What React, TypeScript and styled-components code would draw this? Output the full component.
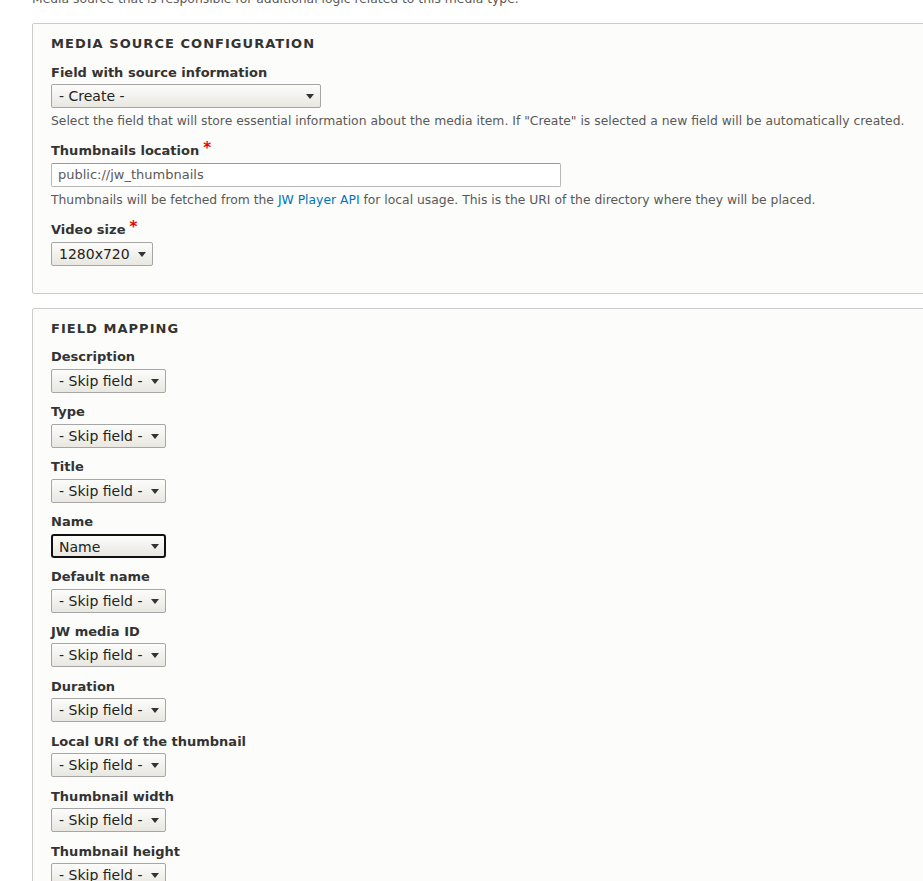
import React from "react";
import styled, { createGlobalStyle } from "styled-components";

const Global = createGlobalStyle`
  html, body {
    margin: 0;
    padding: 0;
    overflow: hidden;
    background: #ffffff;
  }
  body {
    font-family: "DejaVu Sans", "Noto Sans", sans-serif;
    font-size: 13px;
    line-height: 20px;
    color: #222;
  }
`;

const Page = styled.div`
  width: 1000px;
  padding-left: 32px;
`;

const TopDescription = styled.div`
  margin-top: -11px;
  font-size: 12.35px;
  line-height: 20px;
  color: #595959;
`;

const Fieldset = styled.section`
  margin-top: 14px;
  border: 1px solid #ccc;
  border-radius: 2px;
  background: #fcfcfa;
  padding: 10px 18px 27px 18px;
`;

const Legend = styled.div`
  font-size: 13px;
  font-weight: bold;
  line-height: 20px;
  text-transform: uppercase;
  letter-spacing: 0.08em;
  color: #333;
  margin-bottom: 8.5px;
`;

const Items = styled.div`
  display: flex;
  flex-direction: column;
  gap: 9.7px;
`;

const Item = styled.div`
  display: flex;
  flex-direction: column;
  align-items: flex-start;
`;

const Label = styled.label`
  display: block;
  font-size: 13px;
  font-weight: bold;
  line-height: 20px;
  color: #333;
  margin-bottom: 1.3px;
`;

const Required = styled.span`
  color: #e00;
  font-size: 15px;
  margin-left: 4px;
  position: relative;
  top: -2px;
`;

const SelectWrap = styled.span`
  position: relative;
  display: inline-block;
`;

const Select = styled.select<{ $w: number; $focused?: boolean }>`
  appearance: none;
  -webkit-appearance: none;
  box-sizing: border-box;
  width: ${(p) => p.$w}px;
  height: 24px;
  margin: 0;
  padding: 0 22px 0 ${(p) => (p.$focused ? 6 : 7)}px;
  font-family: "DejaVu Sans", sans-serif;
  font-size: 14px;
  line-height: 22px;
  color: #222;
  background: linear-gradient(to bottom, #fcfcfa, #e8e7e1);
  border: ${(p) => (p.$focused ? "2px solid #111" : "1px solid #a6a6a6")};
  border-radius: ${(p) => (p.$focused ? 3 : 2)}px;
  outline: none;
`;

const Arrow = styled.svg`
  position: absolute;
  right: 7px;
  top: 10px;
  width: 8px;
  height: 5px;
  pointer-events: none;
`;

const TextInput = styled.input`
  box-sizing: border-box;
  width: 510px;
  height: 24px;
  margin: 0;
  padding: 0 6px;
  font-family: "DejaVu Sans", sans-serif;
  font-size: 13px;
  color: #595959;
  background: #fff;
  border: 1px solid #b8b8b8;
  border-top-color: #999;
  border-radius: 2px;
  outline: none;
`;

const Description = styled.div`
  margin-top: 3px;
  font-size: 12.35px;
  line-height: 20px;
  color: #595959;
`;

const Link = styled.a`
  color: #0074bd;
  text-decoration: none;
`;

type SelectProps = {
  id: string;
  width: number;
  value: string;
  options: string[];
  focused?: boolean;
};

function DropSelect({ id, width, value, options, focused }: SelectProps) {
  return (
    <SelectWrap>
      <Select id={id} $w={width} $focused={focused} defaultValue={value}>
        {options.map((o) => (
          <option key={o} value={o}>
            {o}
          </option>
        ))}
      </Select>
      <Arrow viewBox="0 0 8 5" aria-hidden>
        <path d="M0 0 H8 L4 5 Z" fill="#333" />
      </Arrow>
    </SelectWrap>
  );
}

const mapping: { label: string; value: string }[] = [
  { label: "Description", value: "- Skip field -" },
  { label: "Type", value: "- Skip field -" },
  { label: "Title", value: "- Skip field -" },
  { label: "Name", value: "Name" },
  { label: "Default name", value: "- Skip field -" },
  { label: "JW media ID", value: "- Skip field -" },
  { label: "Duration", value: "- Skip field -" },
  { label: "Local URI of the thumbnail", value: "- Skip field -" },
  { label: "Thumbnail width", value: "- Skip field -" },
  { label: "Thumbnail height", value: "- Skip field -" },
];

export default function App() {
  return (
    <>
      <Global />
      <Page>
        <TopDescription>
          Media source that is responsible for additional logic related to this media type.
        </TopDescription>

        <Fieldset>
          <Legend>Media source configuration</Legend>
          <Items>
            <Item>
              <Label htmlFor="source-field">Field with source information</Label>
              <DropSelect
                id="source-field"
                width={270}
                value="- Create -"
                options={["- Create -", "Name"]}
              />
              <Description>
                Select the field that will store essential information about the media item. If
                "Create" is selected a new field will be automatically created.
              </Description>
            </Item>
            <Item>
              <Label htmlFor="thumbs">
                Thumbnails location<Required>*</Required>
              </Label>
              <TextInput id="thumbs" defaultValue="public://jw_thumbnails" />
              <Description>
                Thumbnails will be fetched from the <Link href="#">JW Player API</Link> for local
                usage. This is the URI of the directory where they will be placed.
              </Description>
            </Item>
            <Item>
              <Label htmlFor="video-size">
                Video size<Required>*</Required>
              </Label>
              <DropSelect
                id="video-size"
                width={102}
                value="1280x720"
                options={["1280x720", "640x360", "320x180"]}
              />
            </Item>
          </Items>
        </Fieldset>

        <Fieldset>
          <Legend>Field mapping</Legend>
          <Items>
            {mapping.map((m, i) => (
              <Item key={m.label}>
                <Label htmlFor={`map-${i}`}>{m.label}</Label>
                <DropSelect
                  id={`map-${i}`}
                  width={115}
                  value={m.value}
                  focused={m.value === "Name"}
                  options={["- Skip field -", "Name"]}
                />
              </Item>
            ))}
          </Items>
        </Fieldset>
      </Page>
    </>
  );
}
